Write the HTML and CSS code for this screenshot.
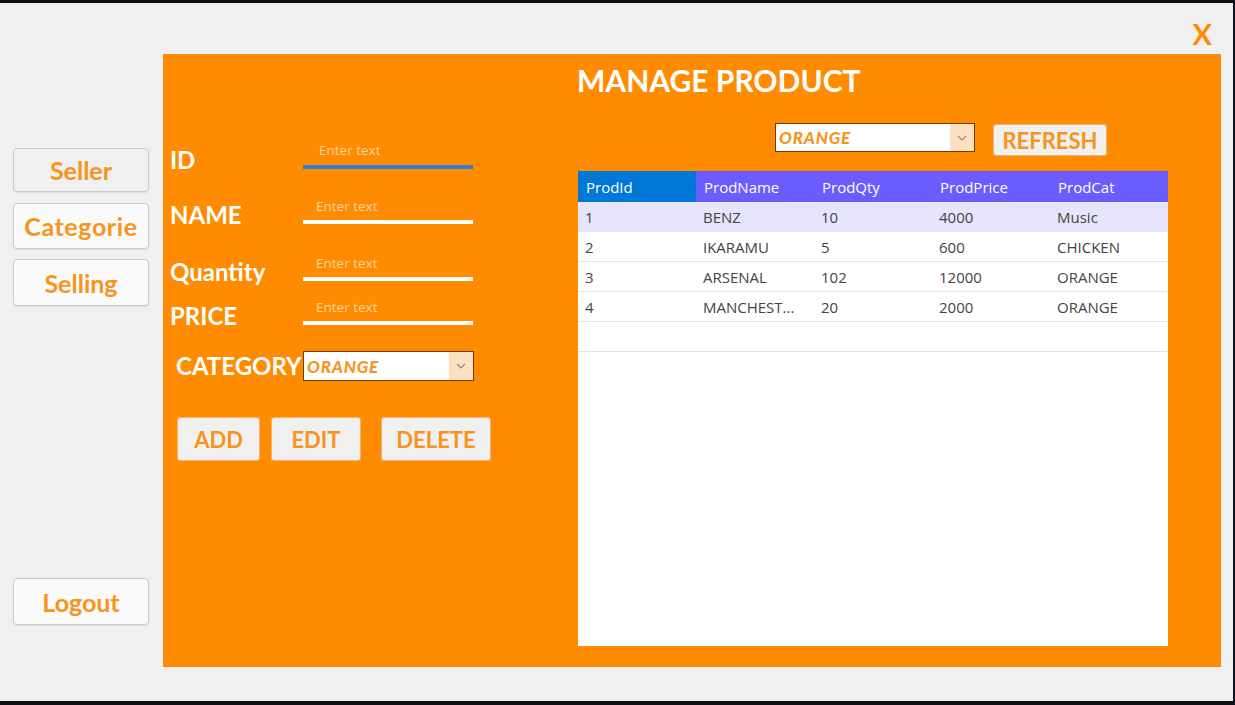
FILE: index.html
```html
<!DOCTYPE html>
<html>
<head>
<meta charset="utf-8">
<link rel="stylesheet" href="styles.css">
</head>
<body>
<div class="frame">
  <div class="topbar"><span class="close">X</span></div>
  <div class="main">
    <nav class="sidebar">
      <button class="side-btn active">Seller</button>
      <button class="side-btn b2">Categorie</button>
      <button class="side-btn b3">Selling</button>
      <button class="side-btn logout">Logout</button>
    </nav>
    <section class="panel">
      <div class="form-col">
        <div class="fields">
          <label class="lbl">ID</label>
          <input class="field focus" placeholder="Enter text">
          <label class="lbl">NAME</label>
          <input class="field" placeholder="Enter text">
          <label class="lbl">Quantity</label>
          <input class="field" placeholder="Enter text">
          <label class="lbl">PRICE</label>
          <input class="field" placeholder="Enter text">
        </div>
        <div class="cat-row">
          <span class="lbl cat-lbl">CATEGORY</span>
          <div class="combo small"><span class="combo-text">ORANGE</span><span class="combo-arrow"><svg width="10" height="6" viewBox="0 0 10 6"><path d="M1 1 L5 5 L9 1" fill="none" stroke="#8a8a8a" stroke-width="1.2"/></svg></span></div>
        </div>
        <div class="actions">
          <button class="act add">ADD</button>
          <button class="act edit">EDIT</button>
          <button class="act del">DELETE</button>
        </div>
      </div>
      <div class="table-col">
        <h1 class="title">MANAGE PRODUCT</h1>
        <div class="filter-row">
          <div class="combo wide"><span class="combo-text">ORANGE</span><span class="combo-arrow"><svg width="10" height="6" viewBox="0 0 10 6"><path d="M1 1 L5 5 L9 1" fill="none" stroke="#8a8a8a" stroke-width="1.2"/></svg></span></div>
          <button class="refresh">REFRESH</button>
        </div>
        <div class="grid">
          <div class="row head">
            <div class="cell first">ProdId</div><div class="cell">ProdName</div><div class="cell">ProdQty</div><div class="cell">ProdPrice</div><div class="cell">ProdCat</div>
          </div>
          <div class="row sel">
            <div class="cell">1</div><div class="cell">BENZ</div><div class="cell">10</div><div class="cell">4000</div><div class="cell">Music</div>
          </div>
          <div class="row">
            <div class="cell">2</div><div class="cell">IKARAMU</div><div class="cell">5</div><div class="cell">600</div><div class="cell">CHICKEN</div>
          </div>
          <div class="row">
            <div class="cell">3</div><div class="cell">ARSENAL</div><div class="cell">102</div><div class="cell">12000</div><div class="cell">ORANGE</div>
          </div>
          <div class="row">
            <div class="cell">4</div><div class="cell">MANCHEST...</div><div class="cell">20</div><div class="cell">2000</div><div class="cell">ORANGE</div>
          </div>
          <div class="row empty"></div>
        </div>
      </div>
    </section>
  </div>
</div>
</body>
</html>
```
FILE: styles.css
```css
* { box-sizing: border-box; }
html, body { margin: 0; padding: 0; background: #0d1117; }
.frame {
  width: 1235px; height: 705px;
  border-top: 3px solid #0d1117;
  border-bottom: 4px solid #0d1117;
  border-right: 2px solid #0d1117;
  background: #f0f0f0;
  display: flex; flex-direction: column;
  font-family: "Lato", "Liberation Sans", sans-serif;
}
.topbar { height: 51px; display: flex; justify-content: flex-end; align-items: flex-start; padding-right: 21px; padding-top: 16px; }
.close { color: #ff8c00; font-family: "Lato", sans-serif; font-size: 29px; line-height: 30px; font-weight: 700; }
.main { display: flex; height: 613px; }
.sidebar { width: 163px; padding: 94px 0 42px 13px; display: flex; flex-direction: column; }
.side-btn {
  width: 136px; height: 45px; border: 1px solid #c9c9c9; border-radius: 4px;
  background: #fafafa; color: #f7941d; font-family: "Lato", sans-serif; font-weight: 700;
  font-size: 25px; padding: 0; box-shadow: 0 1px 1px rgba(0,0,0,0.08);
}
.side-btn.active { background: #f0f0f0; height: 44px; }
.side-btn.b2 { margin-top: 11px; height: 46px; letter-spacing: 0.6px; }
.side-btn.b3 { margin-top: 10px; height: 47px; }
.side-btn.logout { margin-top: auto; height: 47px; }
.panel { width: 1058px; background: #ff8c00; display: grid; grid-template-columns: 415px 590px; }
.form-col { padding: 86px 0 0 7px; }
.fields { display: grid; grid-template-columns: 133px 170px; grid-template-rows: 29px 55px 57px 44px; align-items: end; }
.lbl { color: #fff; font-weight: 700; font-size: 24px; line-height: 1; display: block; margin-bottom: -3px; }
.field {
  height: 26px; width: 170px; border: none; border-bottom: 4px solid #fff; background: transparent;
  padding: 0 0 6px 13px; font-family: "Open Sans", sans-serif; font-size: 13.5px; color: #fff; outline: none;
}
.field::placeholder { color: #f8d3a0; }
.field.focus { border-bottom-color: #2f7fd3; padding-left: 16px; height: 29px; }
.cat-row { display: flex; align-items: center; margin-top: 26px; padding-left: 6px; }
.cat-lbl { width: 127px; font-size: 24px; margin-bottom: 0; }
.combo { display: flex; background: #fff; border: 1px solid #6b3f0a; height: 30px; }
.combo.small { width: 171px; }
.combo.wide { width: 200px; height: 29px; }
.combo-text { flex: 1; color: #f7941d; font-weight: 900; font-style: italic; font-size: 17px; letter-spacing: 0.8px; padding-left: 3px; display: flex; align-items: center; }
.combo-arrow { width: 24px; background: #fde0bf; display: flex; align-items: center; justify-content: center; }
.actions { display: flex; margin-top: 36px; padding-left: 7px; }
.act {
  height: 44px; border: 1px solid #f6b26b; border-radius: 3px; background: #f0f0f0; color: #f7941d;
  font-family: "Lato", sans-serif; font-weight: 700; font-size: 22px; padding: 0;
}
.act.add { width: 83px; }
.act.edit { width: 90px; margin-left: 11px; }
.act.del { width: 110px; margin-left: 20px; }
.table-col { display: flex; flex-direction: column; padding-top: 8px; }
.title { margin: 0; color: #fff; font-size: 30px; line-height: 36px; font-weight: 700; margin-left: -1px; }
.filter-row { display: flex; align-items: flex-start; margin-top: 25px; padding-left: 197px; }
.refresh {
  margin-left: 18px; margin-top: 1px; width: 114px; height: 32px; background: #f0f0f0; border: 1px solid #f6b26b;
  border-radius: 3px; color: #f7941d; font-family: "Lato", sans-serif; font-weight: 700; font-size: 22px; padding: 0;
}
.grid { margin-top: 15px; height: 475px; background: #fff; font-family: "Open Sans", sans-serif; font-size: 15px; }
.row { display: grid; grid-template-columns: repeat(5, 118px); height: 30px; border-bottom: 1px solid #e3e3ee; align-items: center; color: #444; }
.row.head { height: 31px; background: #6b5cff; color: #fff; border-bottom: none; }
.cell { padding-left: 7px; white-space: nowrap; height: 100%; display: flex; align-items: center; }
.head .cell { padding-left: 8px; }
.head .cell.first { background: #0078d7; }
.row.sel { background: #e7e5fb; }
```
